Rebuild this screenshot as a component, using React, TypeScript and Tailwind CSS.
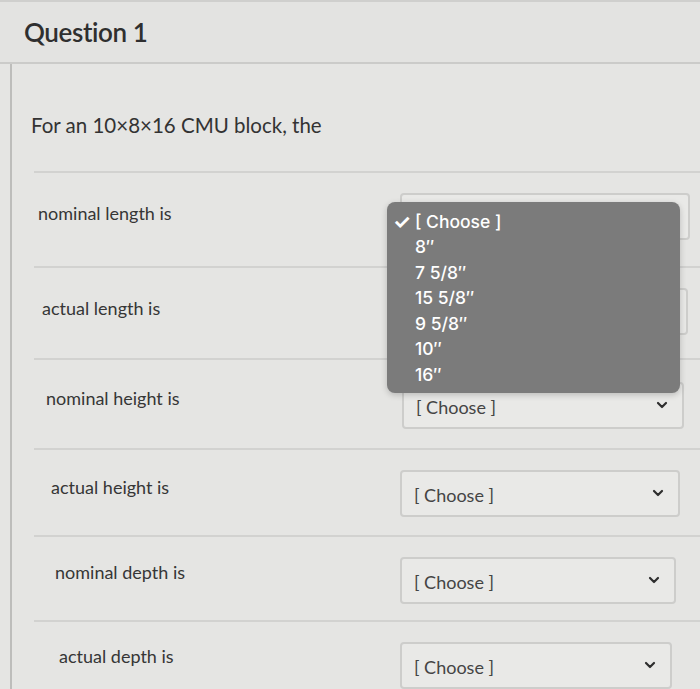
import React from "react";

const rows = [
  { label: "nominal length is", h: "h-[95px]", lp: "pl-[34px] pt-[27px]", sel: "w-[290px] mr-[10px] mt-[20px]", hidden: true },
  { label: "actual length is", h: "h-[92px]", lp: "pl-[38px] pt-[27px]", sel: "w-[288px] mr-[12px] mt-[20px]", hidden: true },
  { label: "nominal height is", h: "h-[90px]", lp: "pl-[42px] pt-[25px]", sel: "w-[282px] mr-[16px] mt-[22px]", hidden: false },
  { label: "actual height is", h: "h-[87px]", lp: "pl-[47px] pt-[24px]", sel: "w-[280px] mr-[20px] mt-[20px]", hidden: false },
  { label: "nominal depth is", h: "h-[85px]", lp: "pl-[51px] pt-[22px]", sel: "w-[276px] mr-[24px] mt-[20px]", hidden: false },
  { label: "actual depth is", h: "h-[80px]", lp: "pl-[55px] pt-[21px]", sel: "w-[272px] mr-[28px] mt-[20px]", hidden: false },
];

const options = ["[ Choose ]", "8\u2033", "7 5/8\u2033", "15 5/8\u2033", "9 5/8\u2033", "10\u2033", "16\u2033"];

function Chevron() {
  return (
    <svg width="12" height="9" viewBox="0 0 12 9" fill="none">
      <path d="M2 2 L6 6 L10 2" stroke="#2e2e2e" strokeWidth="2.2" strokeLinecap="round" strokeLinejoin="round" />
    </svg>
  );
}

export default function App() {
  return (
    <div
      className="relative w-[700px] h-[689px] overflow-hidden bg-[#e5e5e3] text-[#3b3b3b]"
      style={{ fontFamily: "Lato, 'Open Sans', sans-serif" }}
    >
      <div className="h-[2px] bg-[#cfcfcd]" />
      <div className="h-[62px] flex items-center pl-[24px] border-b-2 border-[#cbcbc9] bg-[#e3e3e1]">
        <span className="text-[26px] font-semibold tracking-[-0.4px] text-[#2f2f2f]">Question 1</span>
      </div>
      <div className="ml-[10px] border-l-2 border-[#bdbdbb] h-[625px]">
        <div className="h-[107px] pl-[19px] pt-[46px]">
          <span className="text-[20.5px] text-[#333]">For an 10×8×16 CMU block, the</span>
        </div>
        <div className="ml-[22px]">
          {rows.map((r) => (
            <div key={r.label} className={`${r.h} border-t-2 border-[#d2d2d0] flex justify-between`}>
              <div className={`${r.lp} -ml-[30px] text-[18px] text-[#363636]`}>{r.label}</div>
              <div
                className={`${r.sel} h-[47px] rounded-[4px] border-2 border-[#cdcdcb] bg-[#e9e9e7] flex items-center justify-between pl-[12px] pr-[14px]`}
              >
                <span className="text-[18px] text-[#444] pt-[3px]">{r.hidden ? "" : "[ Choose ]"}</span>
                <Chevron />
              </div>
            </div>
          ))}
        </div>
      </div>
      <div
        className="absolute left-[387px] top-[202px] w-[293px] h-[191px] rounded-[8px] bg-[#7b7b7b] pt-[7px] shadow-[0_2px_6px_rgba(0,0,0,0.2)]"
        style={{ fontFamily: "Inter, 'Liberation Sans', sans-serif" }}
      >
        {options.map((o, i) => (
          <div key={o} className="flex items-center h-[25.5px] text-[17.5px] text-white">
            <span className="w-[28px] pl-[6px] text-[20px] font-bold leading-none">{i === 0 ? "✓" : ""}</span>
            <span className="font-medium">{o}</span>
          </div>
        ))}
      </div>
    </div>
  );
}
